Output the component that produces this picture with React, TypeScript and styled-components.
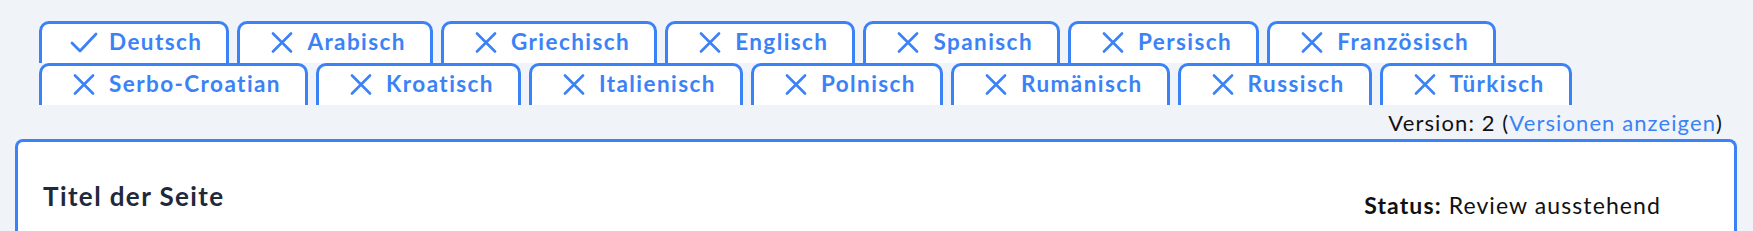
import React from "react";
import styled, { createGlobalStyle } from "styled-components";

const BLUE = "#3b82f6";

const GlobalStyle = createGlobalStyle`
  body {
    margin: 0;
    background: #f0f4f9;
    font-family: Lato, "Open Sans", sans-serif;
    color: #111;
  }
`;

const Page = styled.div`
  padding: 21px 16px 0 15px;
`;

const TabBar = styled.div`
  display: flex;
  flex-wrap: wrap;
  column-gap: 8px;
  padding-left: 24px;
`;

const Tab = styled.div<{ $active?: boolean }>`
  display: flex;
  align-items: center;
  height: 42px;
  box-sizing: border-box;
  padding: 0 24px 4px 28px;
  background: #fff;
  border: 3px solid ${BLUE};
  border-bottom: none;
  border-radius: 10px 10px 0 0;
  color: ${BLUE};
  font-size: 22.5px;
  font-weight: 700;
  letter-spacing: 1.42px;
  white-space: nowrap;
`;

const IconBox = styled.span`
  display: inline-flex;
  align-items: center;
  justify-content: center;
  width: 28px;
  height: 22px;
  margin: 2px 11px 0 0;
`;

const VersionLine = styled.div`
  display: flex;
  justify-content: flex-end;
  align-items: center;
  height: 34px;
  padding-right: 14px;
  font-size: 22px;
  font-weight: 400;
  letter-spacing: 1.1px;
  color: #111;
`;

const VersionLink = styled.a`
  color: ${BLUE};
  text-decoration: none;
  cursor: pointer;
`;

const Card = styled.div`
  background: #fff;
  border: 3px solid ${BLUE};
  border-bottom: none;
  border-radius: 8px 8px 0 0;
  padding: 38px 73px 0 25px;
  display: flex;
  justify-content: space-between;
  align-items: flex-start;
  min-height: 100px;
`;

const Title = styled.h2`
  margin: 0;
  font-size: 26px;
  font-weight: 700;
  letter-spacing: 1.4px;
  color: #1e293b;
  line-height: 32px;
`;

const Status = styled.div`
  margin-top: 10px;
  font-size: 23px;
  font-weight: 400;
  letter-spacing: 1.1px;
  color: #111;
  line-height: 30px;

  b {
    font-weight: 700;
  }
`;

const CheckIcon = () => (
  <svg width="28" height="21" viewBox="0 0 28 21" fill="none">
    <path d="M2 11 L10 19 L26 2" stroke={BLUE} strokeWidth="2.8" strokeLinecap="round" strokeLinejoin="round" />
  </svg>
);

const XIcon = () => (
  <svg width="22" height="21" viewBox="0 0 22 21" fill="none">
    <path d="M2 1.5 L20 19.5 M20 1.5 L2 19.5" stroke={BLUE} strokeWidth="2.6" strokeLinecap="round" />
  </svg>
);

const languages: [string, boolean][] = [
  ["Deutsch", true],
  ["Arabisch", false],
  ["Griechisch", false],
  ["Englisch", false],
  ["Spanisch", false],
  ["Persisch", false],
  ["Französisch", false],
  ["Serbo-Croatian", false],
  ["Kroatisch", false],
  ["Italienisch", false],
  ["Polnisch", false],
  ["Rumänisch", false],
  ["Russisch", false],
  ["Türkisch", false],
];

const App = () => {
  return (
    <Page>
      <GlobalStyle />
      <TabBar>
        {languages.map(([name, done]) => (
          <Tab key={name} $active={done}>
            <IconBox>{done ? <CheckIcon /> : <XIcon />}</IconBox>
            {name}
          </Tab>
        ))}
      </TabBar>
      <VersionLine>
        Version: 2&nbsp;(<VersionLink>Versionen anzeigen</VersionLink>)
      </VersionLine>
      <Card>
        <Title>Titel der Seite</Title>
        <Status>
          <b>Status:</b> Review ausstehend
        </Status>
      </Card>
    </Page>
  );
};

export default App;
